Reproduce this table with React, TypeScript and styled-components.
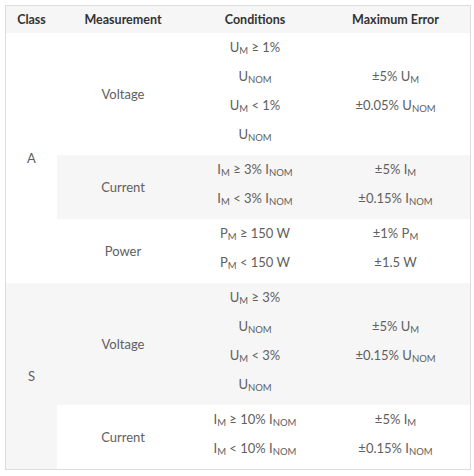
import React from "react";
import styled, { createGlobalStyle } from "styled-components";

const Global = createGlobalStyle`
  html, body { margin: 0; padding: 0; background: #fff; }
  body { font-family: Lato, "PT Sans", "Open Sans", sans-serif; }
`;

const Page = styled.div`
  padding: 5px;
`;

const Table = styled.table`
  width: 464px;
  border-collapse: collapse;
  border: 1px solid #dcdcdc;
  font-size: 13px;
  color: #606060;
  table-layout: fixed;
`;

const HeadRow = styled.tr`
  background: #f6f6f6;
  height: 27px;
`;

const HeadCell = styled.th<{ $w: number }>`
  width: ${(p) => p.$w}px;
  padding: 0;
  font-size: 12.5px;
  font-weight: 700;
  color: #333;
  text-align: center;
  vertical-align: middle;
`;

const Row = styled.tr<{ $shade?: boolean }>`
  background: ${(p) => (p.$shade ? "#f6f6f6" : "#fff")};
`;

const Cell = styled.td<{ $shade?: boolean }>`
  padding: 3px 0;
  text-align: center;
  vertical-align: middle;
  background: ${(p) => (p.$shade ? "#f6f6f6" : "transparent")};
`;

const Line = styled.div`
  height: 22px;
  line-height: 22px;
  margin-bottom: 7px;
  white-space: nowrap;
`;

const Sub = styled.sub`
  font-size: 9.5px;
  vertical-align: -2px;
  line-height: 0;
`;

const U = () => (
  <>
    U<Sub>M</Sub>
  </>
);
const UN = () => (
  <>
    U<Sub>NOM</Sub>
  </>
);
const I = () => (
  <>
    I<Sub>M</Sub>
  </>
);
const IN = () => (
  <>
    I<Sub>NOM</Sub>
  </>
);
const P = () => (
  <>
    P<Sub>M</Sub>
  </>
);

export default function App() {
  return (
    <>
      <Global />
      <Page>
        <Table>
          <thead>
            <HeadRow>
              <HeadCell $w={51}>Class</HeadCell>
              <HeadCell $w={132}>Measurement</HeadCell>
              <HeadCell $w={132}>Conditions</HeadCell>
              <HeadCell $w={149}>Maximum Error</HeadCell>
            </HeadRow>
          </thead>
          <tbody>
            <Row>
              <Cell rowSpan={3}>A</Cell>
              <Cell>Voltage</Cell>
              <Cell>
                <Line>
                  <U /> ≥ 1%
                </Line>
                <Line>
                  <UN />
                </Line>
                <Line>
                  <U /> &lt; 1%
                </Line>
                <Line>
                  <UN />
                </Line>
              </Cell>
              <Cell>
                <Line>
                  ±5% <U />
                </Line>
                <Line>
                  ±0.05% <UN />
                </Line>
              </Cell>
            </Row>
            <Row>
              <Cell $shade>Current</Cell>
              <Cell $shade>
                <Line>
                  <I /> ≥ 3% <IN />
                </Line>
                <Line>
                  <I /> &lt; 3% <IN />
                </Line>
              </Cell>
              <Cell $shade>
                <Line>
                  ±5% <I />
                </Line>
                <Line>
                  ±0.15% <IN />
                </Line>
              </Cell>
            </Row>
            <Row>
              <Cell>Power</Cell>
              <Cell>
                <Line>
                  <P /> ≥ 150 W
                </Line>
                <Line>
                  <P /> &lt; 150 W
                </Line>
              </Cell>
              <Cell>
                <Line>
                  ±1% <P />
                </Line>
                <Line>±1.5 W</Line>
              </Cell>
            </Row>
            <Row $shade>
              <Cell rowSpan={2} $shade>
                S
              </Cell>
              <Cell>Voltage</Cell>
              <Cell>
                <Line>
                  <U /> ≥ 3%
                </Line>
                <Line>
                  <UN />
                </Line>
                <Line>
                  <U /> &lt; 3%
                </Line>
                <Line>
                  <UN />
                </Line>
              </Cell>
              <Cell>
                <Line>
                  ±5% <U />
                </Line>
                <Line>
                  ±0.15% <UN />
                </Line>
              </Cell>
            </Row>
            <Row>
              <Cell>Current</Cell>
              <Cell>
                <Line>
                  <I /> ≥ 10% <IN />
                </Line>
                <Line>
                  <I /> &lt; 10% <IN />
                </Line>
              </Cell>
              <Cell>
                <Line>
                  ±5% <I />
                </Line>
                <Line>
                  ±0.15% <IN />
                </Line>
              </Cell>
            </Row>
          </tbody>
        </Table>
      </Page>
    </>
  );
}
